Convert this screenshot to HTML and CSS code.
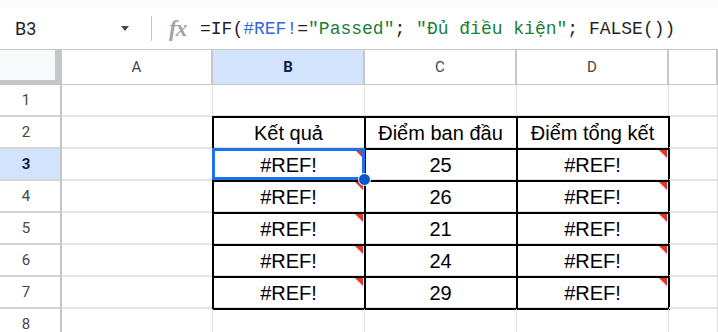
FILE: index.html
```html
<!DOCTYPE html>
<html lang="vi">

<head>
    <meta charset="UTF-8">
    <meta name="viewport" content="width=device-width, initial-scale=1.0">
    <title>Bảng tính</title>
    <link rel="stylesheet" href="styles.css">
</head>

<body>
    <div class="top-strip"></div>

    <div class="formula-bar">
        <div class="name-box">
            <span class="cell-ref">B3</span>
            <span class="caret"></span>
        </div>
        <div class="divider"></div>
        <div class="fx">fx</div>
        <div class="formula">=IF(<span class="f-ref">#REF!</span>=<span class="f-str">"Passed"</span>; <span class="f-str">"Đủ điều kiện"</span>; FALSE())</div>
    </div>

    <div class="sheet">
        <!-- header row -->
        <div class="corner"></div>
        <div class="col-head">A</div>
        <div class="col-head active">B</div>
        <div class="col-head">C</div>
        <div class="col-head">D</div>
        <div class="col-head"></div>

        <!-- row 1 -->
        <div class="row-head">1</div>
        <div class="cell"></div>
        <div class="cell"></div>
        <div class="cell"></div>
        <div class="cell"></div>
        <div class="cell"></div>

        <!-- row 2 -->
        <div class="row-head">2</div>
        <div class="cell"></div>
        <div class="cell boxed">Kết quả</div>
        <div class="cell boxed">Điểm ban đầu</div>
        <div class="cell boxed">Điểm tổng kết</div>
        <div class="cell"></div>

        <!-- row 3 -->
        <div class="row-head active">3</div>
        <div class="cell"></div>
        <div class="cell boxed selected">#REF!<span class="err"></span><span class="sel-frame"></span><span class="handle"></span></div>
        <div class="cell boxed">25</div>
        <div class="cell boxed">#REF!<span class="err"></span></div>
        <div class="cell"></div>

        <!-- row 4 -->
        <div class="row-head">4</div>
        <div class="cell"></div>
        <div class="cell boxed">#REF!<span class="err"></span></div>
        <div class="cell boxed">26</div>
        <div class="cell boxed">#REF!<span class="err"></span></div>
        <div class="cell"></div>

        <!-- row 5 -->
        <div class="row-head">5</div>
        <div class="cell"></div>
        <div class="cell boxed">#REF!<span class="err"></span></div>
        <div class="cell boxed">21</div>
        <div class="cell boxed">#REF!<span class="err"></span></div>
        <div class="cell"></div>

        <!-- row 6 -->
        <div class="row-head">6</div>
        <div class="cell"></div>
        <div class="cell boxed">#REF!<span class="err"></span></div>
        <div class="cell boxed">24</div>
        <div class="cell boxed">#REF!<span class="err"></span></div>
        <div class="cell"></div>

        <!-- row 7 -->
        <div class="row-head">7</div>
        <div class="cell"></div>
        <div class="cell boxed">#REF!<span class="err"></span></div>
        <div class="cell boxed">29</div>
        <div class="cell boxed">#REF!<span class="err"></span></div>
        <div class="cell"></div>

        <!-- row 8 -->
        <div class="row-head">8</div>
        <div class="cell"></div>
        <div class="cell"></div>
        <div class="cell"></div>
        <div class="cell"></div>
        <div class="cell"></div>
    </div>
</body>

</html>
```

FILE: styles.css
```css
* {
    box-sizing: border-box;
}

body {
    margin: 0;
    width: 718px;
    height: 332px;
    overflow: hidden;
    background: white;
    font-family: Roboto, 'Liberation Sans', sans-serif;
}

.top-strip {
    height: 8px;
    background: #f9fbfd;
}

.formula-bar {
    height: 42px;
    display: flex;
    align-items: center;
    border-bottom: 1px solid #c7c7c7;
    background: white;
}

.name-box {
    width: 151px;
    display: flex;
    align-items: center;
    justify-content: space-between;
    padding: 0 22px 0 15px;
    color: #1f1f1f;
    font-size: 18px;
}

.caret {
    width: 0;
    height: 0;
    border-left: 4px solid transparent;
    border-right: 4px solid transparent;
    border-top: 5px solid #444746;
}

.divider {
    width: 1px;
    height: 25px;
    background: #c7c7c7;
}

.fx {
    margin-left: 17px;
    width: 20px;
    font-family: 'Liberation Serif', serif;
    font-style: italic;
    font-weight: bold;
    font-size: 23px;
    color: #a3a3a3;
    line-height: 1;
    letter-spacing: -1px;
}

.formula {
    margin-left: 11px;
    font-family: 'Liberation Mono', 'DejaVu Sans Mono', monospace;
    font-size: 18px;
    color: #1f1f1f;
    white-space: nowrap;
}

.f-ref {
    color: #3367d6;
}

.f-str {
    color: #188038;
}

.sheet {
    display: grid;
    grid-template-columns: 62px 151px 152px 152px 152px 1fr;
    grid-template-rows: 35px repeat(8, 32px);
}

.corner {
    background: #f8f9fa;
    border-right: 7px solid #c4c7c5;
    border-bottom: 5px solid #c4c7c5;
}

.col-head {
    display: flex;
    align-items: center;
    justify-content: center;
    font-size: 15px;
    color: #444746;
    border-right: 2px solid #c7c7c7;
    border-bottom: 1px solid #c4c7c5;
}

.col-head.active,
.row-head.active {
    background: #d3e3fd;
    color: #0b1d46;
    font-weight: bold;
}

.row-head {
    display: flex;
    align-items: center;
    justify-content: center;
    padding-right: 8px;
    font-size: 15px;
    color: #444746;
    border-right: 2px solid #c4c7c5;
    border-bottom: 2px solid #d4d4d4;
}

.cell {
    position: relative;
    display: flex;
    align-items: center;
    justify-content: center;
    padding-top: 3px;
    font-family: 'Liberation Sans', Arial, sans-serif;
    font-size: 20px;
    color: #000;
    border-right: 1px solid #e1e1e1;
    border-bottom: 2px solid #e3e3e3;
}

.cell.boxed {
    outline: 2px solid #000;
    outline-offset: -1px;
}

.err {
    position: absolute;
    top: 1px;
    right: 1px;
    width: 0;
    height: 0;
    border-top: 8px solid #e0362b;
    border-left: 8px solid transparent;
    z-index: 1;
}

.sel-frame {
    position: absolute;
    top: -1px;
    left: -1px;
    right: -1px;
    bottom: -1px;
    border: 3px solid #1a73e8;
    z-index: 2;
}

.handle {
    position: absolute;
    right: -7px;
    bottom: -7px;
    width: 13px;
    height: 13px;
    border-radius: 50%;
    background: #0b57d0;
    border: 1px solid white;
    z-index: 3;
}
```
